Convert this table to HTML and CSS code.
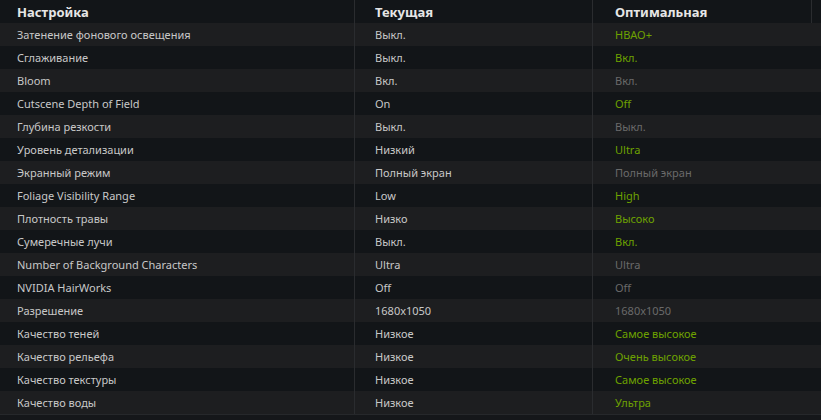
FILE: index.html
```html
<!DOCTYPE html>
<html lang="ru">
<head>
    <meta charset="UTF-8">
    <title>Настройки</title>
    <link rel="stylesheet" href="styles.css">
</head>
<body>
    <div class="settings">
        <div class="row head">
            <div class="cell">Настройка</div>
            <div class="cell">Текущая</div>
            <div class="cell">Оптимальная</div>
            <div class="cell spacer"></div>
        </div>
        <div class="row"><div class="cell">Затенение фонового освещения</div><div class="cell">Выкл.</div><div class="cell opt">HBAO+</div></div>
        <div class="row"><div class="cell">Сглаживание</div><div class="cell">Выкл.</div><div class="cell opt">Вкл.</div></div>
        <div class="row"><div class="cell">Bloom</div><div class="cell">Вкл.</div><div class="cell same">Вкл.</div></div>
        <div class="row"><div class="cell">Cutscene Depth of Field</div><div class="cell">On</div><div class="cell opt">Off</div></div>
        <div class="row"><div class="cell">Глубина резкости</div><div class="cell">Выкл.</div><div class="cell same">Выкл.</div></div>
        <div class="row"><div class="cell">Уровень детализации</div><div class="cell">Низкий</div><div class="cell opt">Ultra</div></div>
        <div class="row"><div class="cell">Экранный режим</div><div class="cell">Полный экран</div><div class="cell same">Полный экран</div></div>
        <div class="row"><div class="cell">Foliage Visibility Range</div><div class="cell">Low</div><div class="cell opt">High</div></div>
        <div class="row"><div class="cell">Плотность травы</div><div class="cell">Низко</div><div class="cell opt">Высоко</div></div>
        <div class="row"><div class="cell">Сумеречные лучи</div><div class="cell">Выкл.</div><div class="cell opt">Вкл.</div></div>
        <div class="row"><div class="cell">Number of Background Characters</div><div class="cell">Ultra</div><div class="cell same">Ultra</div></div>
        <div class="row"><div class="cell">NVIDIA HairWorks</div><div class="cell">Off</div><div class="cell same">Off</div></div>
        <div class="row"><div class="cell">Разрешение</div><div class="cell">1680x1050</div><div class="cell same">1680x1050</div></div>
        <div class="row"><div class="cell">Качество теней</div><div class="cell">Низкое</div><div class="cell opt">Самое высокое</div></div>
        <div class="row"><div class="cell">Качество рельефа</div><div class="cell">Низкое</div><div class="cell opt">Очень высокое</div></div>
        <div class="row"><div class="cell">Качество текстуры</div><div class="cell">Низкое</div><div class="cell opt">Самое высокое</div></div>
        <div class="row"><div class="cell">Качество воды</div><div class="cell">Низкое</div><div class="cell opt">Ультра</div></div>
    </div>
</body>
</html>
```

FILE: styles.css
```css
body {
    margin: 0;
    background: #15171a;
    font-family: "Noto Sans", "Open Sans", sans-serif;
    font-size: 11px;
    color: #c8c8c8;
}

.settings {
    border-bottom: 1px solid #26282b;
}

.row {
    display: grid;
    grid-template-columns: 354px 238px 1fr;
    height: 23px;
    background: #121518;
}

.row:nth-child(even) {
    background: #1d1e20;
}

.row.head {
    grid-template-columns: 354px 238px 219px 1fr;
    background: #121518;
}

.cell {
    display: flex;
    align-items: center;
    padding-left: 17px;
    border-left: 1px solid #2a2c2f;
    white-space: nowrap;
}

.cell:first-child {
    border-left: 0;
}

.cell:nth-child(2) {
    padding-left: 20px;
}

.cell:nth-child(3) {
    padding-left: 22px;
}

.head .cell {
    font-size: 13px;
    font-weight: 700;
    color: #e6e6e6;
}

.head .spacer {
    padding: 0;
}

.opt {
    color: #6ea200;
}

.same {
    color: #6a6a6a;
}
```
